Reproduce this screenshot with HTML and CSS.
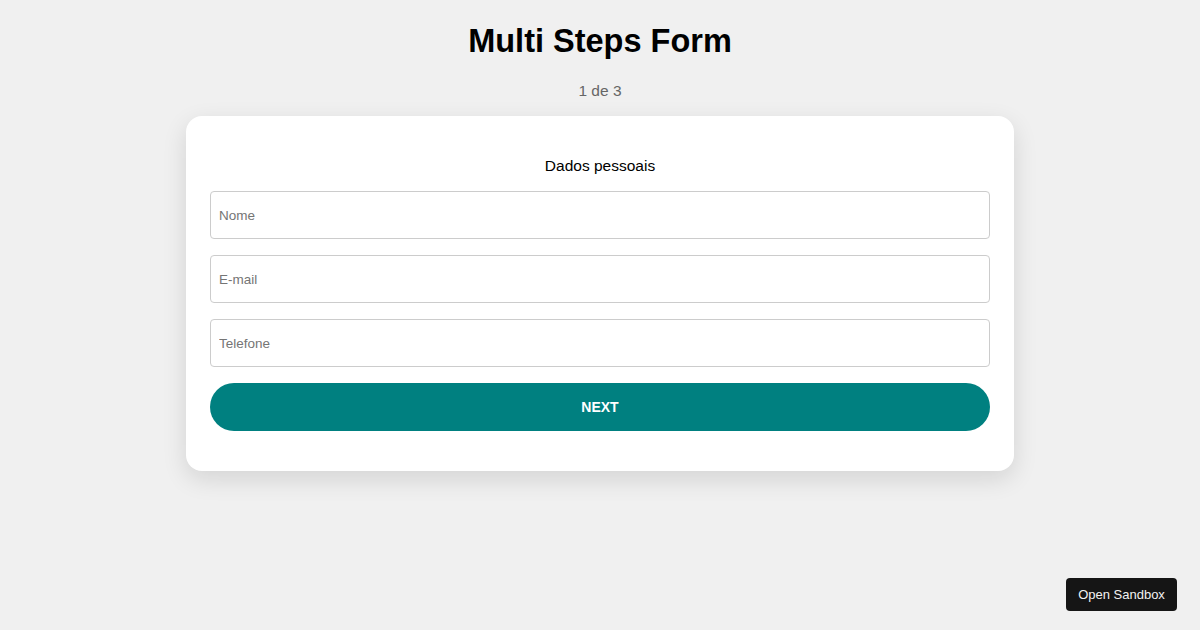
FILE: index.html
```html
<!DOCTYPE html>
<html lang="pt">
<head>
<meta charset="utf-8">
<title>Multi Steps Form</title>
<link rel="stylesheet" href="styles.css">
</head>
<body>
<main class="page">
  <h1 class="title">Multi Steps Form</h1>
  <p class="step">1 de 3</p>
  <form class="card">
    <h2 class="card-title">Dados pessoais</h2>
    <input class="field" type="text" placeholder="Nome">
    <input class="field" type="email" placeholder="E-mail">
    <input class="field" type="tel" placeholder="Telefone">
    <button class="next" type="button">NEXT</button>
  </form>
</main>
<a class="sandbox" href="#">Open Sandbox</a>
</body>
</html>
```
FILE: styles.css
```css
html, body {
  margin: 0;
  padding: 0;
}
body {
  background: #f0f0f0;
  font-family: "Liberation Sans", Arial, sans-serif;
  color: #000;
  height: 630px;
  overflow: hidden;
}
.page {
  display: flex;
  flex-direction: column;
  align-items: center;
  padding-top: 23px;
}
.title {
  margin: 0;
  font-size: 32.5px;
  line-height: 37px;
  font-weight: 700;
}
.step {
  margin: 22px 0 16px;
  font-size: 15.5px;
  line-height: 18px;
  color: #666;
}
.card {
  width: 828px;
  box-sizing: border-box;
  background: #fff;
  border-radius: 16px;
  box-shadow: 0 8px 24px rgba(0, 0, 0, 0.12);
  padding: 40px 24px 40px;
  display: flex;
  flex-direction: column;
  gap: 16px;
}
.card-title {
  margin: 0;
  font-size: 15.5px;
  line-height: 19px;
  font-weight: 400;
  text-align: center;
}
.field {
  height: 48px;
  box-sizing: border-box;
  border: 1px solid #ccc;
  border-radius: 4px;
  padding: 0 8px;
  font-family: "Liberation Sans", Arial, sans-serif;
  font-size: 13.5px;
  color: #333;
  outline: none;
}
.field::placeholder {
  color: #757575;
}
.next {
  height: 48px;
  border: none;
  border-radius: 24px;
  background: #008080;
  color: #fff;
  font-family: "Liberation Sans", Arial, sans-serif;
  font-size: 14px;
  font-weight: 700;
  cursor: pointer;
}
.sandbox {
  position: fixed;
  right: 23px;
  bottom: 19px;
  width: 111px;
  height: 33px;
  box-sizing: border-box;
  display: flex;
  align-items: center;
  justify-content: center;
  background: #151515;
  border-radius: 4px;
  color: #f2f2f2;
  font-size: 13px;
  text-decoration: none;
}
```
